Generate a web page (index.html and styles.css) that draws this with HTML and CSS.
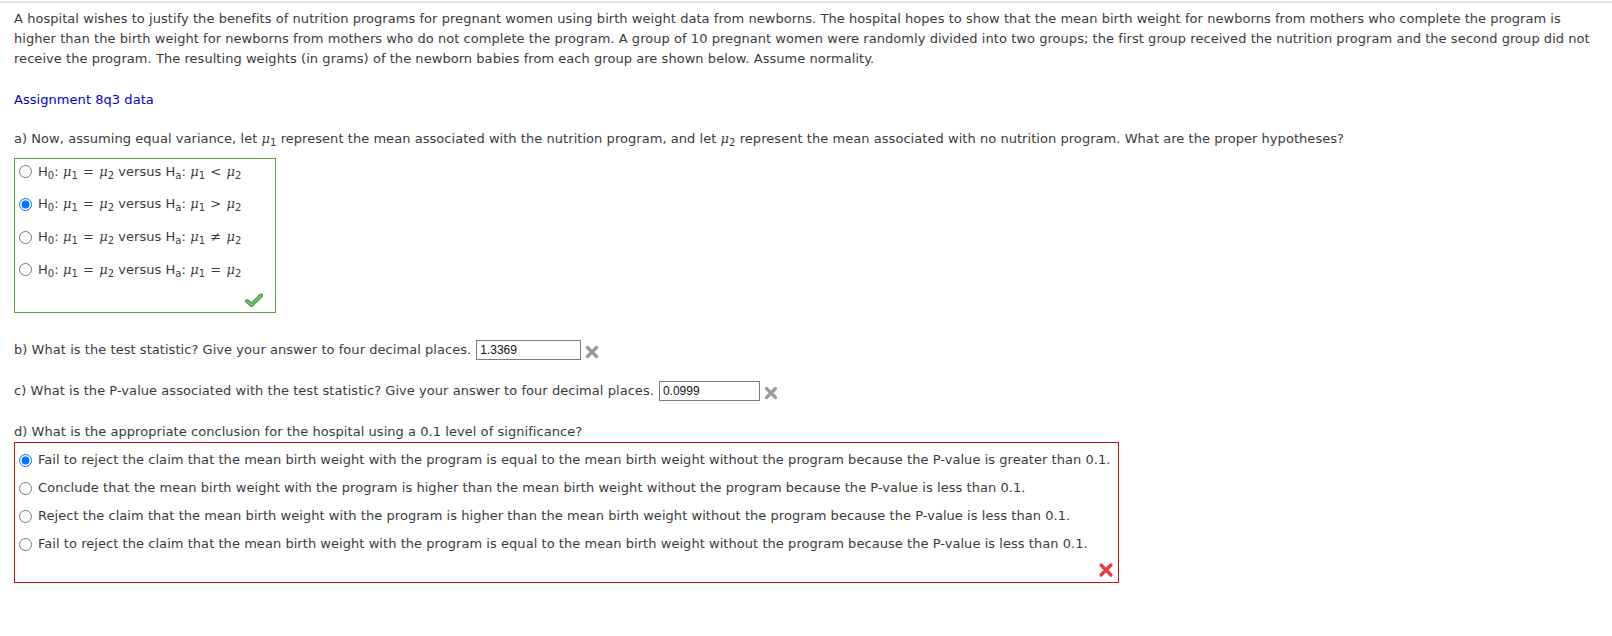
FILE: index.html
```html
<!DOCTYPE html>
<html>
<head>
<meta charset="utf-8">
<link rel="stylesheet" href="styles.css">
</head>
<body>
<div class="page">
  <p class="intro">A hospital wishes to justify the benefits of nutrition programs for pregnant women using birth weight data from newborns. The hospital hopes to show that the mean birth weight for newborns from mothers who complete the program is higher than the birth weight for newborns from mothers who do not complete the program. A group of 10 pregnant women were randomly divided into two groups; the first group received the nutrition program and the second group did not receive the program. The resulting weights (in grams) of the newborn babies from each group are shown below. Assume normality.</p>

  <p class="link-row"><a class="link" href="#">Assignment 8q3 data</a></p>

  <p class="q q-a">a) Now, assuming equal variance, let <i class="mu">μ</i><sub>1</sub> represent the mean associated with the nutrition program, and let <i class="mu">μ</i><sub>2</sub> represent the mean associated with no nutrition program. What are the proper hypotheses?</p>
  <div class="box box-green">
    <label class="opt-h"><input type="radio" name="a"><span>H<sub>0</sub>: <i class="mu">μ</i><sub>1</sub> <span class="op">=</span> <i class="mu">μ</i><sub>2</sub> versus H<sub>a</sub>: <i class="mu">μ</i><sub>1</sub> <span class="op">&lt;</span> <i class="mu">μ</i><sub>2</sub></span></label>
    <label class="opt-h"><input type="radio" name="a" checked><span>H<sub>0</sub>: <i class="mu">μ</i><sub>1</sub> <span class="op">=</span> <i class="mu">μ</i><sub>2</sub> versus H<sub>a</sub>: <i class="mu">μ</i><sub>1</sub> <span class="op">&gt;</span> <i class="mu">μ</i><sub>2</sub></span></label>
    <label class="opt-h"><input type="radio" name="a"><span>H<sub>0</sub>: <i class="mu">μ</i><sub>1</sub> <span class="op">=</span> <i class="mu">μ</i><sub>2</sub> versus H<sub>a</sub>: <i class="mu">μ</i><sub>1</sub> <span class="op">≠</span> <i class="mu">μ</i><sub>2</sub></span></label>
    <label class="opt-h"><input type="radio" name="a"><span>H<sub>0</sub>: <i class="mu">μ</i><sub>1</sub> <span class="op">=</span> <i class="mu">μ</i><sub>2</sub> versus H<sub>a</sub>: <i class="mu">μ</i><sub>1</sub> <span class="op">=</span> <i class="mu">μ</i><sub>2</sub></span></label>
    <div class="mark-row mark-row-green">
      <svg class="check" width="18" height="14" viewBox="0 0 18 14"><path d="M2 8 L6.5 12 L16 2.5" fill="none" stroke="#3f8f3f" stroke-width="4" stroke-linecap="round" stroke-linejoin="round"/><path d="M2 8 L6.5 12 L16 2.5" fill="none" stroke="#6cc46c" stroke-width="2.2" stroke-linecap="round" stroke-linejoin="round"/></svg>
    </div>
  </div>

  <p class="q q-b">b) What is the test statistic? Give your answer to four decimal places. <input class="ans ans-b" type="text" value="1.3369"><svg class="xmark" width="14" height="14" viewBox="0 0 14 14"><path d="M2.5 2.5 L11.5 11.5 M11.5 2.5 L2.5 11.5" stroke="#9a9a9a" stroke-width="3.2" stroke-linecap="round"/></svg></p>

  <p class="q q-c">c) What is the P-value associated with the test statistic? Give your answer to four decimal places. <input class="ans ans-c" type="text" value="0.0999"><svg class="xmark" width="14" height="14" viewBox="0 0 14 14"><path d="M2.5 2.5 L11.5 11.5 M11.5 2.5 L2.5 11.5" stroke="#9a9a9a" stroke-width="3.2" stroke-linecap="round"/></svg></p>

  <p class="q q-d">d) What is the appropriate conclusion for the hospital using a 0.1 level of significance?</p>
  <div class="box box-red">
    <label class="opt-d"><input type="radio" name="d" checked><span>Fail to reject the claim that the mean birth weight with the program is equal to the mean birth weight without the program because the P-value is greater than 0.1.</span></label>
    <label class="opt-d"><input type="radio" name="d"><span>Conclude that the mean birth weight with the program is higher than the mean birth weight without the program because the P-value is less than 0.1.</span></label>
    <label class="opt-d"><input type="radio" name="d"><span>Reject the claim that the mean birth weight with the program is higher than the mean birth weight without the program because the P-value is less than 0.1.</span></label>
    <label class="opt-d"><input type="radio" name="d"><span>Fail to reject the claim that the mean birth weight with the program is equal to the mean birth weight without the program because the P-value is less than 0.1.</span></label>
    <div class="mark-row mark-row-red">
      <svg class="xred" width="16" height="16" viewBox="0 0 16 16"><path d="M3 3 L13 13 M13 3 L3 13" stroke="#e8383d" stroke-width="3.2" stroke-linecap="round"/></svg>
    </div>
  </div>
</div>
</body>
</html>
```
FILE: styles.css
```css
html, body {
  margin: 0;
  padding: 0;
  background: #fff;
}
body {
  border-top: 2px solid #e3e3e3;
  margin-top: 1px;
}
.page {
  padding: 6px 0 0 14px;
  width: 1584px;
  font-family: "DejaVu Sans", Verdana, sans-serif;
  font-size: 13px;
  letter-spacing: 0.05px;
  color: #3b3b3b;
  line-height: 20px;
}
p { margin: 0; }
.intro { margin-bottom: 21px; }
.link-row { margin-bottom: 19px; }
.link { color: #0000cc; text-decoration: none; }
sub { font-size: 10px; line-height: 0; vertical-align: -3px; }
.mu { font-family: "DejaVu Serif", serif; font-style: italic; }
.op { margin: 0 1px; }
.q-a { margin-bottom: 8.5px; }
.box { border: 1px solid; }
.box-green {
  border-color: #60a23a;
  width: 260px;
  padding-top: 3.4px;
}
.opt-h {
  display: flex;
  align-items: center;
  height: 20px;
  padding-left: 2px;
  white-space: nowrap;
}
.opt-h + .opt-h { margin-top: 12.6px; }
.opt-h input, .opt-d input {
  margin: 0 6px 0 2px;
  width: 13px;
  height: 13px;
  flex: none;
}
.mark-row {
  display: flex;
  justify-content: flex-end;
  align-items: center;
}
.mark-row-green {
  height: 32px;
  padding: 0 12px 5px 0;
  align-items: flex-end;
  box-sizing: border-box;
}
.q-b { margin-top: 27px; display: flex; align-items: center; height: 20px; }
.q-c { margin-top: 21px; display: flex; align-items: center; height: 20px; }
.ans {
  font-family: "Liberation Sans", Arial, sans-serif;
  font-size: 12px;
  letter-spacing: 0;
  color: #111;
  border: 1px solid #7a7a7a;
  padding: 0 3px;
  box-sizing: border-box;
  margin-left: 5px;
  outline: none;
}
.ans-b { width: 105px; height: 20px; }
.ans-c { width: 101px; height: 20px; }
.xmark { margin-left: 4px; margin-top: 5px; }
.q-d { margin-top: 21px; }
.box-red {
  border-color: #cc1111;
  width: 1103px;
  padding-top: 3.5px;
}
.opt-d {
  display: flex;
  align-items: center;
  height: 28px;
  padding-left: 2px;
  white-space: nowrap;
}
.mark-row-red { height: 23.5px; padding-right: 4px; }
```
